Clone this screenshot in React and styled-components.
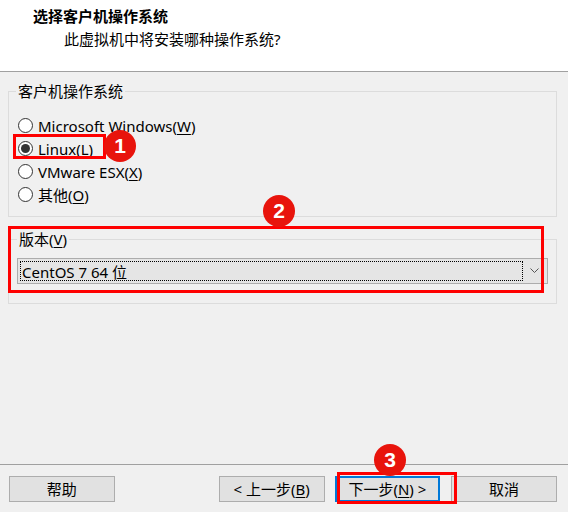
import React from 'react';
import styled, { createGlobalStyle } from 'styled-components';

const GlobalStyle = createGlobalStyle`
  html, body {
    margin: 0;
    padding: 0;
    background: #f0f0f0;
  }
  body {
    font-family: 'Noto Sans', 'Noto Sans CJK SC', sans-serif;
    font-size: 15px;
    color: #000;
  }
`;

const Dialog = styled.div`
  position: relative;
  width: 568px;
  height: 512px;
  display: flex;
  flex-direction: column;
  background: #f0f0f0;
  overflow: hidden;
`;

const Header = styled.div`
  height: 72px;
  background: #fff;
  border-bottom: 1px solid #a0a0a0;
  box-sizing: border-box;
  padding: 6px 0 0 33px;
`;

const Title = styled.div`
  font-weight: 700;
  line-height: 21px;
`;

const Subtitle = styled.div`
  padding-left: 31px;
  margin-top: 2px;
  line-height: 21px;
`;

const Body = styled.div`
  flex: 1;
  padding: 9px 11px 0 8px;
`;

const Group = styled.fieldset`
  margin: 0 0 ${p => p.gap || 0}px;
  padding: 0 8px ${p => p.padBottom}px ${p => p.padLeft || 7}px;
  border: 1px solid #dcdcdc;
  min-width: 0;
`;

const Legend = styled.legend`
  padding: 0 2px;
  line-height: 20px;
`;

const Options = styled.div`
  padding-top: 13px;
  display: flex;
  flex-direction: column;
`;

const Option = styled.label`
  display: flex;
  align-items: center;
  height: 23px;
  gap: 5px;
  padding-left: 2px;
`;

const Radio = styled.span`
  width: 15px;
  height: 15px;
  box-sizing: border-box;
  border: 1px solid #333;
  border-radius: 50%;
  background: #fff;
  display: flex;
  align-items: center;
  justify-content: center;

  &::after {
    content: '';
    width: 9px;
    height: 9px;
    border-radius: 50%;
    background: ${p => (p.checked ? '#333' : 'transparent')};
  }
`;

const Key = styled.span`
  text-decoration: underline;
  text-underline-offset: 2px;
`;

const Select = styled.div`
  margin-top: 9px;
  height: 26px;
  box-sizing: border-box;
  border: 1px solid #acacac;
  background: #e5e5e5;
  display: flex;
  align-items: center;
  padding: 2px;
`;

const SelectValue = styled.div`
  flex: 1;
  height: 100%;
  box-sizing: border-box;
  border: 1px dotted #000;
  display: flex;
  align-items: center;
  padding-left: 1px;
`;

const Chevron = styled.div`
  width: 22px;
  display: flex;
  justify-content: center;
`;

const Footer = styled.div`
  height: 48px;
  box-sizing: border-box;
  border-top: 1px solid #a0a0a0;
  padding: 11px 11px 0 9px;
  display: flex;
  align-items: flex-start;
`;

const Button = styled.button`
  width: 106px;
  height: 26px;
  box-sizing: border-box;
  margin-left: ${p => p.ml || 0}px;
  border: ${p => (p.focused ? '2px solid #0078d7' : '1px solid #adadad')};
  background: #e1e1e1;
  font-family: inherit;
  font-size: 15px;
  color: #000;
  padding: 0;
  line-height: 1;
`;

const Highlight = styled.div`
  position: absolute;
  border: 3px solid #fe0000;
  box-sizing: border-box;
`;

const Badge = styled.div`
  position: absolute;
  width: 32px;
  height: 32px;
  border-radius: 50%;
  background: #e8140c;
  color: #fff;
  font-family: 'Liberation Sans', Arial, sans-serif;
  font-weight: 700;
  font-size: 21px;
  display: flex;
  align-items: center;
  justify-content: center;
`;

export default function App() {
  return (
    <>
      <GlobalStyle />
      <Dialog>
        <Header>
          <Title>选择客户机操作系统</Title>
          <Subtitle>此虚拟机中将安装哪种操作系统?</Subtitle>
        </Header>
        <Body>
          <Group padBottom={10} gap={12}>
            <Legend>客户机操作系统</Legend>
            <Options>
              <Option><Radio /><span>Microsoft Windows(<Key>W</Key>)</span></Option>
              <Option><Radio checked /><span>Linux(L)</span></Option>
              <Option><Radio /><span>VMware ESX(<Key>X</Key>)</span></Option>
              <Option><Radio /><span>其他(<Key>O</Key>)</span></Option>
            </Options>
          </Group>
          <Group padBottom={19} padLeft={8}>
            <Legend>版本(<Key>V</Key>)</Legend>
            <Select>
              <SelectValue>CentOS 7 64 位</SelectValue>
              <Chevron>
                <svg width="9" height="6" viewBox="0 0 9 6">
                  <path d="M0.5 0.5 L4.5 4.5 L8.5 0.5" fill="none" stroke="#555" strokeWidth="1" />
                </svg>
              </Chevron>
            </Select>
          </Group>
        </Body>
        <Footer>
          <Button>帮助</Button>
          <Button ml={104}>&lt; 上一步(<Key>B</Key>)</Button>
          <Button ml={10} focused>下一步(<Key>N</Key>) &gt;</Button>
          <Button ml={11}>取消</Button>
        </Footer>

        <Highlight style={{ left: 13, top: 134, width: 93, height: 25 }} />
        <Highlight style={{ left: 8, top: 226, width: 536, height: 67 }} />
        <Highlight style={{ left: 337, top: 472, width: 120, height: 32 }} />
        <Badge style={{ left: 104, top: 130 }}>1</Badge>
        <Badge style={{ left: 263, top: 195 }}>2</Badge>
        <Badge style={{ left: 374, top: 444 }}>3</Badge>
      </Dialog>
    </>
  );
}
